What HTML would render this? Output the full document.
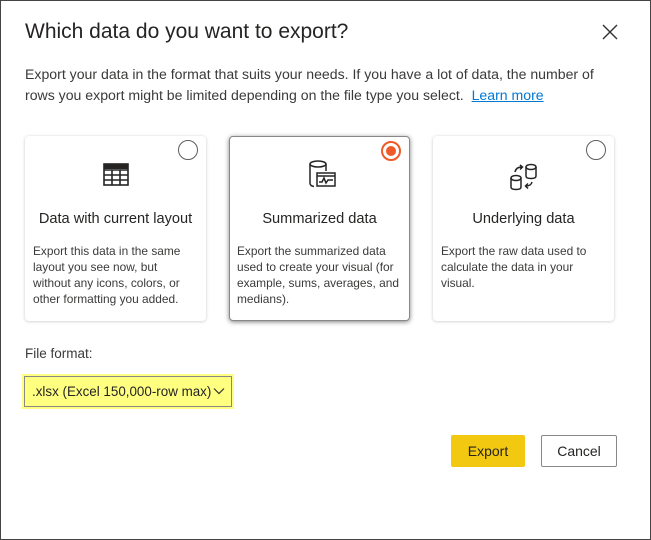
<!DOCTYPE html>
<html><head><meta charset="utf-8"><style>
*{box-sizing:border-box;margin:0;padding:0}
body{width:651px;height:540px;background:#fff;font-family:"Liberation Sans",sans-serif;color:#252423;position:relative;overflow:hidden}
.frame{position:absolute;left:0;top:0;width:651px;height:540px;border:1px solid #444}
.abs{position:absolute;white-space:nowrap}
h1{position:absolute;left:25px;top:20px;font-size:21px;font-weight:normal;color:#252423}
.p{font-size:14.1px;color:#3b3a39}
.card{position:absolute;top:136px;width:181px;height:185px;background:#fff;border-radius:4px;box-shadow:0 0.5px 3px rgba(0,0,0,.22)}
.card.sel{box-shadow:0 1px 5px rgba(0,0,0,.5);border:1px solid #8a8886}
.radio{position:absolute;right:8px;top:4px;width:20px;height:20px;border:1.5px solid #605e5c;border-radius:50%}
.radio.on{border:2px solid #f05a28}
.radio.on::after{content:"";position:absolute;left:3px;top:3px;width:10px;height:10px;border-radius:50%;background:#f05a28}
.ct{position:absolute;top:75px;left:0;width:100%;text-align:center;font-size:14.6px;color:#252423}
.cd{position:absolute;top:107px;left:8px;font-size:11.9px;line-height:16px;color:#3b3a39;white-space:nowrap}
.icon{position:absolute;top:25px;left:50%;transform:translateX(-50%)}
</style></head><body>
<div class="frame"></div>
<h1>Which data do you want to export?</h1>
<svg class="abs" style="left:601px;top:23px" width="18" height="18" viewBox="0 0 18 18"><path d="M2 2L16 16M16 2L2 16" stroke="#323130" stroke-width="1.4" fill="none"/></svg>
<div class="abs p" style="left:25px;top:66px">Export your data in the format that suits your needs. If you have a lot of data, the number of</div>
<div class="abs p" style="left:25px;top:87px">rows you export might be limited depending on the file type you select.&nbsp; <span style="color:#0078d4;text-decoration:underline">Learn more</span></div>

<div class="card" style="left:25px">
<div class="radio"></div>
<svg class="icon" width="28" height="28" viewBox="0 0 28 28"><g fill="none" stroke="#252423" stroke-width="1.6"><rect x="2" y="3" width="24" height="21"/><path d="M2 9H26M2 14H26M2 19H26M10 9V24M18 9V24"/></g><rect x="2" y="3" width="24" height="5" fill="#252423"/></svg>
<div class="ct">Data with current layout</div>
<div class="cd">Export this data in the same<br>layout you see now, but<br>without any icons, colors, or<br>other formatting you added.</div>
</div>

<div class="card sel" style="left:229px">
<div class="radio on"></div>
<svg class="icon" width="34" height="32" viewBox="0 0 34 32" style="left:76px;transform:none;top:22px"><g fill="none" stroke="#252423" stroke-width="1.5"><ellipse cx="12" cy="5" rx="8" ry="3"/><path d="M4 5V24Q4 27 8 27.5M20 5V12"/><rect x="11" y="14" width="18" height="13" fill="#fff"/><path d="M11 17H29M13 23H16L18 19L20 24L22 21H27"/></g></svg>
<div class="ct" style="top:74px">Summarized data</div>
<div class="cd" style="left:7px;top:106px">Export the summarized data<br>used to create your visual (for<br>example, sums, averages, and<br>medians).</div>
</div>

<div class="card" style="left:433px">
<div class="radio"></div>
<svg class="icon" width="34" height="32" viewBox="0 0 34 32"><g fill="none" stroke="#252423" stroke-width="1.5"><ellipse cx="24" cy="6" rx="5" ry="2.5"/><path d="M19 6V15Q19 17.5 24 17.5Q29 17.5 29 15V6"/><ellipse cx="9" cy="17" rx="5" ry="2.5"/><path d="M4 17V26Q4 28.5 9 28.5Q14 28.5 14 26V17"/><path d="M8 11Q9 6 15 6M13 4L15.5 6L13 8.5"/><path d="M25 21Q24 25 19 25M21 22.5L18.5 25L21 27.5"/></g></svg>
<div class="ct">Underlying data</div>
<div class="cd">Export the raw data used to<br>calculate the data in your<br>visual.</div>
</div>

<div class="abs p" style="left:25px;top:346px;font-size:13.5px">File format:</div>
<div class="abs" style="left:22px;top:374px;width:212px;height:35px;background:#ffff80"></div>
<div class="abs" style="left:24px;top:376px;width:208px;height:31px;border:1px solid #8a8886;background:#ffff80"></div>
<div class="abs" style="left:32px;top:384px;font-size:13.4px;color:#252423">.xlsx (Excel 150,000-row max)</div>
<svg class="abs" style="left:213px;top:387px" width="12" height="8" viewBox="0 0 12 8"><path d="M1 1.5L6 6.5L11 1.5" stroke="#323130" stroke-width="1.2" fill="none"/></svg>

<div class="abs" style="left:451px;top:435px;width:74px;height:32px;background:#f2c811;border-radius:2px;font-size:14px;text-align:center;line-height:32px;color:#252423">Export</div>
<div class="abs" style="left:541px;top:435px;width:76px;height:32px;border:1px solid #8a8886;border-radius:2px;font-size:14px;text-align:center;line-height:30px;color:#252423">Cancel</div>
</body></html>
